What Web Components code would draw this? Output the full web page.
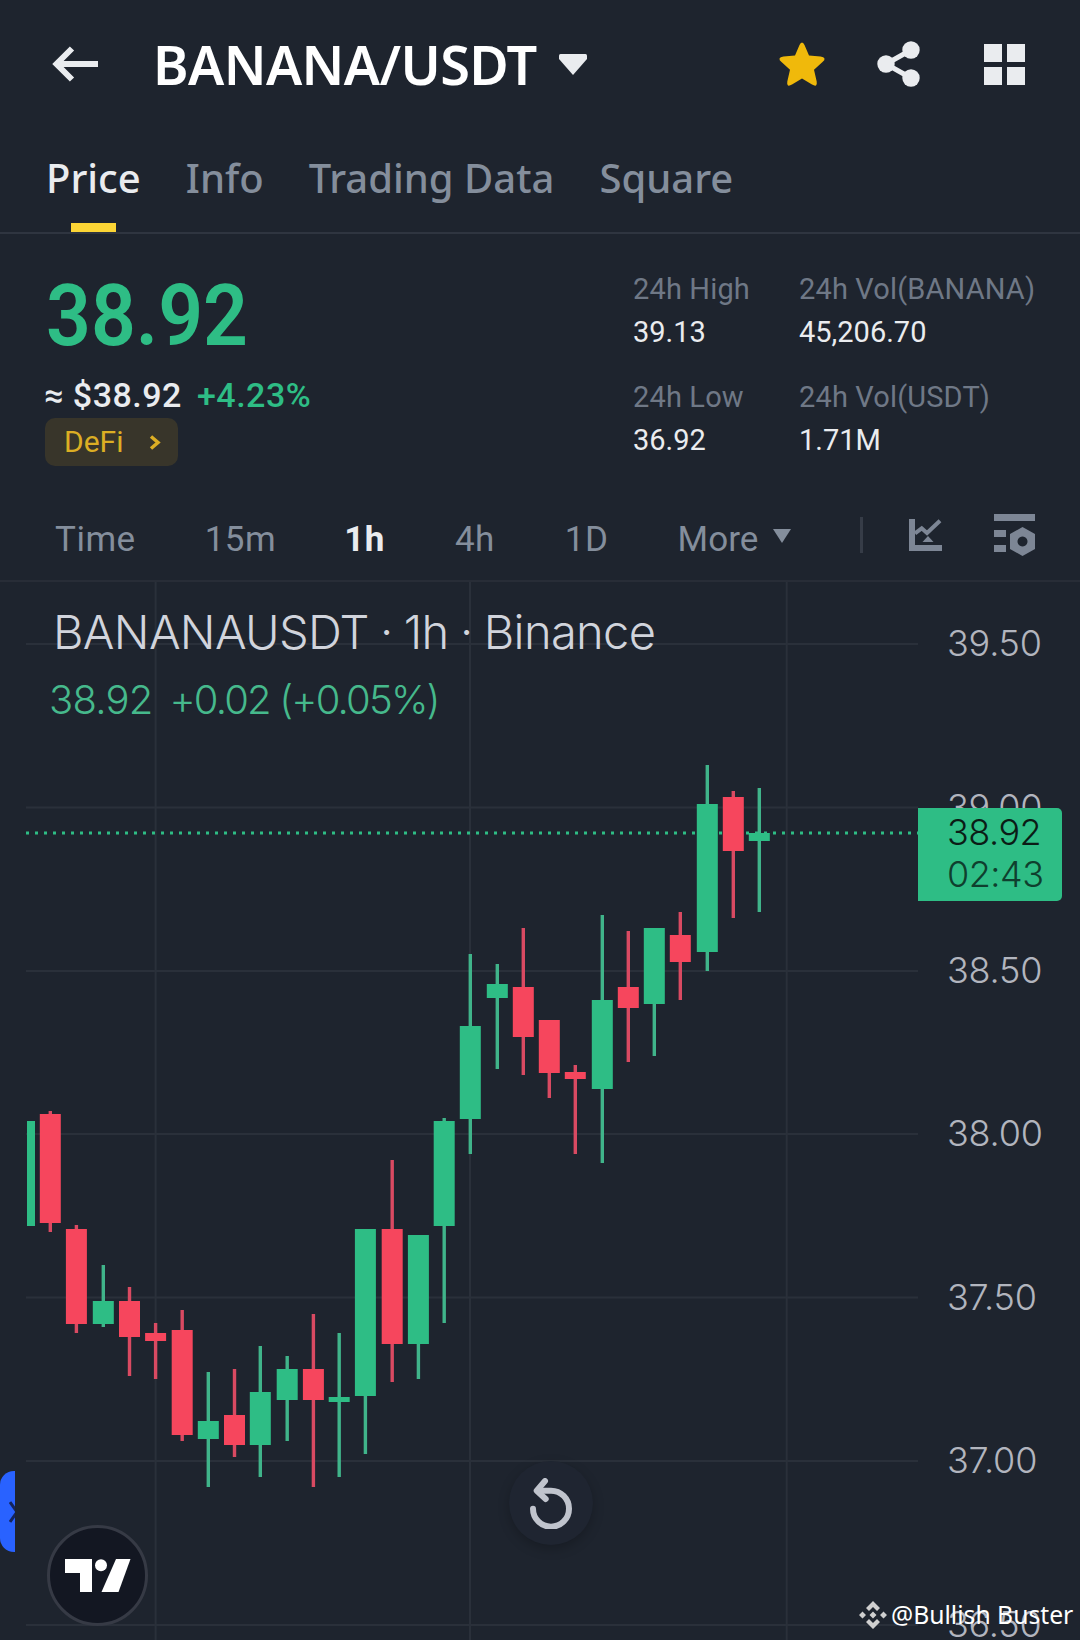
<!DOCTYPE html>
<html lang="en"><head><meta charset="utf-8"><title>BANANA/USDT</title>
<style>
html,body{margin:0;padding:0;background:#1e242e;}
body{width:1080px;height:1640px;overflow:hidden;font-family:"Noto Sans","Liberation Sans",sans-serif;color:#eaecef;}
</style></head><body>
<market-screen>
  <app-header pair="BANANA/USDT"></app-header>
  <tab-bar></tab-bar>
  <price-summary></price-summary>
  <interval-bar></interval-bar>
  <chart-panel></chart-panel>
</market-screen>
<script>
function shell(el,html){el.attachShadow({mode:'open'}).innerHTML=html;}
customElements.define('market-screen',class extends HTMLElement{constructor(){super();shell(this,`<style>:host{display:flex;flex-direction:column;width:1080px;height:1640px;overflow:hidden;background:#1e242e}</style><slot></slot>`)}});

customElements.define('app-header',class extends HTMLElement{constructor(){super();shell(this,`<style>
:host{display:flex;align-items:center;height:128px;padding:0 55px 0 52px;box-sizing:border-box;flex:none}
svg{display:block;flex:none}
.t{font:600 54px/60px "Noto Sans",sans-serif;color:#fff;margin-left:55px;letter-spacing:-.6px;white-space:nowrap}
.caret{margin-left:22px}
.sp{flex:1}
.share{margin-left:52px}.grid{margin-left:64px}
</style>
<svg width="46" height="36" viewBox="0 0 46 36"><path d="M46 18H6M20 2.500L4.500 18L20 33.500" fill="none" stroke="#eaecef" stroke-width="6"/></svg>
<span class="t">${this.getAttribute('pair')}</span>
<svg class="caret" width="28" height="21" viewBox="0 0 28 21"><path d="M1.500 0H26.500Q28 0 28 1.500V5L14 21L0 5V1.500Q0 0 1.500 0Z" fill="#eaecef"/></svg>
<span class="sp"></span>
<svg width="46" height="46" viewBox="0 0 46 46"><path d="M23 1.500Q24.500 1.500 25.500 4L30 14.500L41.500 15.500Q45 16 45.500 17.500Q46 19 43.500 21L35 28.800L37.700 40.500Q38.200 43.500 37 44.500Q35.500 45 33 43.500L23 37.500L13 43.500Q10.500 45 9 44.500Q7.800 43.500 8.300 40.500L11 28.800L2.500 21Q0 19 .5 17.500Q1 16 4.500 15.500L16 14.500L20.500 4Q21.500 1.500 23 1.500Z" fill="#f0b90b"/></svg>
<svg class="share" width="43" height="46" viewBox="0 0 43 46"><g fill="#eaecef"><circle cx="34" cy="9" r="8.700"/><circle cx="34" cy="37" r="8.700"/><circle cx="9" cy="23" r="8.700"/></g><path d="M34 9L9 23L34 37" fill="none" stroke="#eaecef" stroke-width="5"/></svg>
<svg class="grid" width="41" height="41" viewBox="0 0 41 41" fill="#eaecef"><rect width="18" height="18"/><rect x="23" width="18" height="18"/><rect y="23" width="18" height="18"/><rect x="23" y="23" width="18" height="18"/></svg>`)}});

customElements.define('tab-bar',class extends HTMLElement{constructor(){super();shell(this,`<style>
:host{display:flex;height:106px;box-sizing:border-box;border-bottom:2px solid #2f3540;padding-left:46px;gap:45px;flex:none;font:500 40px/1 "Noto Sans",sans-serif;color:#848e9c}
div{position:relative;padding-top:30px;white-space:nowrap}
.on{color:#eaecef}
.on::after{content:"";position:absolute;left:25px;width:45px;height:9px;top:95px;background:#fcd535}
</style><div class="on">Price</div><div>Info</div><div>Trading Data</div><div>Square</div>`)}});

customElements.define('stat-cell',class extends HTMLElement{constructor(){super();shell(this,`<style>
:host{display:block;white-space:nowrap}
.l{font:400 29px/36px Roboto,sans-serif;color:#6f7886;letter-spacing:.15px}
.v{font:400 29px/36px Roboto,sans-serif;color:#eaecef;letter-spacing:0;margin-top:7px}
</style><div class="l">${this.getAttribute('label')}</div><div class="v">${this.getAttribute('value')}</div>`)}});

customElements.define('price-summary',class extends HTMLElement{constructor(){super();shell(this,`<style>
:host{display:flex;justify-content:space-between;height:256px;box-sizing:border-box;padding:37px 0 0 46px;flex:none;font-family:Roboto,sans-serif}
.big{font:600 85px/86px Roboto,sans-serif;color:#2ebd85;height:86px;padding-top:2px;transform:scaleX(.925);transform-origin:left top}
.sub{display:flex;gap:15px;font:500 34px/40px Roboto,sans-serif;letter-spacing:.5px;margin:16px 0 0 -2px;white-space:nowrap}
.up{color:#2ebd85}
.chip{display:inline-flex;align-items:center;height:48px;box-sizing:border-box;padding:0 17px 0 19px;margin-top:3px;border-radius:10px;background:#38352a;color:#dcae24;font:400 30px/1 Roboto,sans-serif;gap:26px;margin-left:-1px}
.stats{display:grid;grid-template-columns:166px 281px;row-gap:29px;align-content:start}
svg{display:block}
</style>
<div><div class="big">38.92</div><div class="sub"><span>≈ $38.92</span><span class="up">+4.23%</span></div>
<div class="chip">DeFi<svg width="12" height="15" viewBox="0 0 12 15"><path d="M2 1.500L9 7.500L2 13.500" fill="none" stroke="#dcae24" stroke-width="3.500"/></svg></div></div>
<div class="stats"><stat-cell label="24h High" value="39.13"></stat-cell><stat-cell label="24h Vol(BANANA)" value="45,206.70"></stat-cell><stat-cell label="24h Low" value="36.92"></stat-cell><stat-cell label="24h Vol(USDT)" value="1.71M"></stat-cell></div>`)}});

customElements.define('interval-bar',class extends HTMLElement{constructor(){super();shell(this,`<style>
:host{display:flex;align-items:center;height:92px;box-sizing:border-box;border-bottom:2px solid #282d37;flex:none;padding-left:55px;font:400 35px/1 Roboto,sans-serif;color:#848e9c;letter-spacing:.5px;white-space:nowrap}
span{padding-top:8px}
.on{color:#eaecef;font-weight:700}
svg{display:block;flex:none}
</style>
<span>Time</span><span style="margin-left:69px">15m</span><span class="on" style="margin-left:68px">1h</span><span style="margin-left:70px">4h</span><span style="margin-left:70px">1D</span><span style="margin-left:69px;letter-spacing:.1px">More</span>
<svg style="margin:2px 0 0 14px" width="18" height="14" viewBox="0 0 18 14"><path d="M0 0H18L9 14Z" fill="#848e9c"/></svg>
<svg style="margin-left:69px" width="3" height="36"><rect width="3" height="36" fill="#363c47"/></svg>
<svg style="margin-left:46px" width="33" height="33" viewBox="0 0 33 33" fill="#7d8695"><path d="M0 0H6V26H33V32H0Z"/><path d="M6 14.300L12.700 9.300L18 14L31 1.700" fill="none" stroke="#7d8695" stroke-width="4"/><path d="M19 17L24.500 23H13.500Z"/></svg>
<svg style="margin-left:52px" width="41" height="43" viewBox="0 0 41 43" fill="#7d8695"><rect width="41" height="7"/><rect y="16" width="12" height="7"/><rect y="31" width="12" height="7"/><path fill-rule="evenodd" d="M28.500 13L41 20V35L28.500 42L16 35V20ZM28.500 22.500A5 5 0 1 0 28.510 22.500Z"/></svg>`)}});

const C=[
[31,1121,1226,1121,1226,'g',8],
[50.3,1111,1232,1114,1223,'r'],[76.4,1225,1333,1229,1324,'r'],[103.3,1265,1327,1301,1324,'g'],
[129.5,1287,1376,1301,1337,'r'],[155.6,1323,1379,1333,1341,'r'],[182.2,1310,1441,1330,1435,'r'],
[208.3,1372,1487,1421,1439,'g'],[234.5,1369,1457,1415,1445,'r'],[260.3,1346,1477,1392,1445,'g'],
[287.2,1356,1441,1369,1400,'g'],[313.4,1314,1487,1369,1400,'r'],[339.2,1333,1477,1397,1402,'g'],
[365.4,1229,1454,1229,1396,'g'],[392.2,1160,1382,1229,1344,'r'],[418.4,1235,1379,1235,1344,'g'],
[444.2,1118,1323,1121,1226,'g'],[470.3,954,1154,1026,1119,'g'],[497.3,964,1069,984,998,'g'],
[523.3,928,1075,987,1037,'r'],[549.3,1020,1098,1020,1073,'r'],[575.3,1065,1154,1072,1079,'r'],
[602.3,915,1163,1000,1089,'g'],[628.3,931,1062,987,1008,'r'],[654.3,928,1056,928,1004,'g'],
[680.3,912,1000,935,962,'r'],[707.3,765,971,804,952,'g'],[733.3,791,918,797,851,'r'],[759.3,788,912,833,841,'g']];
const TOP=582;
customElements.define('chart-panel',class extends HTMLElement{constructor(){super();
const col={g:'#2ebd85',r:'#f6465d'},wick={g:'#40b48a',r:'#d94a62'};
let grid='';
[644,807.5,971,1134,1297.500,1461,1625].forEach(y=>grid+=`<rect x="26" y="${y-1-TOP}" width="892" height="2" fill="#2a303a"/>`);
[155.6,470,786.7].forEach(x=>grid+=`<rect x="${x-1}" y="0" width="2" height="1060" fill="#2a303a"/>`);
let c='';
C.forEach(([x,wt,wb,bt,bb,k,w])=>{w=w||21;
 c+=`<rect x="${x-1.7}" y="${wt-TOP}" width="3.400" height="${wb-wt}" fill="${wick[k]}"/><rect x="${x-w/2}" y="${bt-TOP}" width="${w}" height="${bb-bt}" fill="${col[k]}"/>`;});
const axis=[['39.50',644],['39.00',807.5],['38.50',971],['38.00',1134],['37.50',1297.5],['37.00',1461],['36.50',1625]]
 .map(([t,y])=>`<span class="ax" style="top:${y-TOP-23}px">${t}</span>`).join('');
shell(this,`<style>
:host{display:block;position:relative;flex:1;font-family:Inter,Roboto,"Liberation Sans",sans-serif;font-weight:300;overflow:hidden}
svg.c{position:absolute;left:0;top:0}
.leg1{position:absolute;left:53px;top:22px;font-size:47px;line-height:56px;color:#d1d4dc;white-space:nowrap;letter-spacing:-.66px;word-spacing:-1.300px}
.leg2{position:absolute;left:49px;top:93px;font-size:40px;line-height:50px;color:#46b98c;white-space:nowrap;letter-spacing:-.8px}
.leg2 b{font-weight:inherit;margin-left:17px;letter-spacing:-1.800px}
.ax{position:absolute;left:947px;font-size:36px;line-height:44px;color:#b2b5be;letter-spacing:-.2px}
.tag{position:absolute;left:918px;top:226px;width:144px;height:93px;background:#2ebd85;border-radius:0 5px 5px 0;box-sizing:border-box;padding:3px 0 0 29px;font-size:36px;line-height:42px;color:#0b1c16;letter-spacing:-.5px}
.tag i{display:block;font-style:normal;color:#0f3f2e}
.tv{position:absolute;left:47px;top:943px;width:101px;height:101px;box-sizing:border-box;border-radius:50%;background:#131722;border:3px solid #363a45;display:flex;align-items:center;justify-content:center}
.blue{position:absolute;left:0;top:889px;width:15px;height:81px;background:#2962ff;border-radius:14px 0 0 14px;overflow:hidden}
.blue svg{position:absolute;left:9px;top:30px}
.reload{position:absolute;left:509px;top:879px;width:84px;height:84px;border-radius:50%;background:#1f2531;box-shadow:0 4px 12px rgba(0,0,0,.22);display:flex;align-items:center;justify-content:center}
.wm{position:absolute;left:859px;top:1018px;display:flex;align-items:center;gap:4px;font:400 24.700px/30px "Noto Sans",sans-serif;color:#fff;white-space:nowrap}
</style>
<svg class="c" width="1080" height="1058" viewBox="0 0 1080 1058">${grid}
<line x1="26" x2="918" y1="251" y2="251" stroke="#2ebd85" stroke-width="3" stroke-dasharray="3 6"/>${c}</svg>
<span class="leg1">BANANAUSDT · 1h · Binance</span>
<span class="leg2">38.92<b>+0.02 (+0.05%)</b></span>
${axis}
<div class="tag">38.92<i>02:43</i></div>
<div class="reload"><svg width="42" height="51" viewBox="0 0 42 51"><path d="M13 12.700H21A18 18 0 1 1 3 30.700" fill="none" stroke="#c0c4cd" stroke-width="6" stroke-linecap="round"/><path d="M15 3L6.700 12.700L15.700 21" fill="none" stroke="#c0c4cd" stroke-width="6" stroke-linecap="round" stroke-linejoin="round"/></svg></div>
<div class="blue"><svg width="10" height="22" viewBox="0 0 10 22"><path d="M1 1L8 11L1 21" fill="none" stroke="#14245c" stroke-width="3"/></svg></div>
<div class="tv"><svg width="66" height="33" viewBox="0 0 66 33" fill="#fff"><path d="M0 0H27V33H15V14H0Z"/><circle cx="36" cy="6.300" r="6"/><path d="M51 0H65.500L53.500 33H36.500Z"/></svg></div>
<div class="wm"><svg width="28" height="28" viewBox="0 0 28 28" fill="#cfcfcf"><path d="M14 0L21 7L18 10L14 6L10 10L7 7ZM3.500 10.500L7 14L3.500 17.500L0 14ZM24.500 10.500L28 14L24.500 17.500L21 14ZM14 10.500L17.500 14L14 17.500L10.500 14ZM18 18L21 21L14 28L7 21L10 18L14 22Z"/></svg><span>@Bullish Buster</span></div>`);
}});
</script></body></html>
